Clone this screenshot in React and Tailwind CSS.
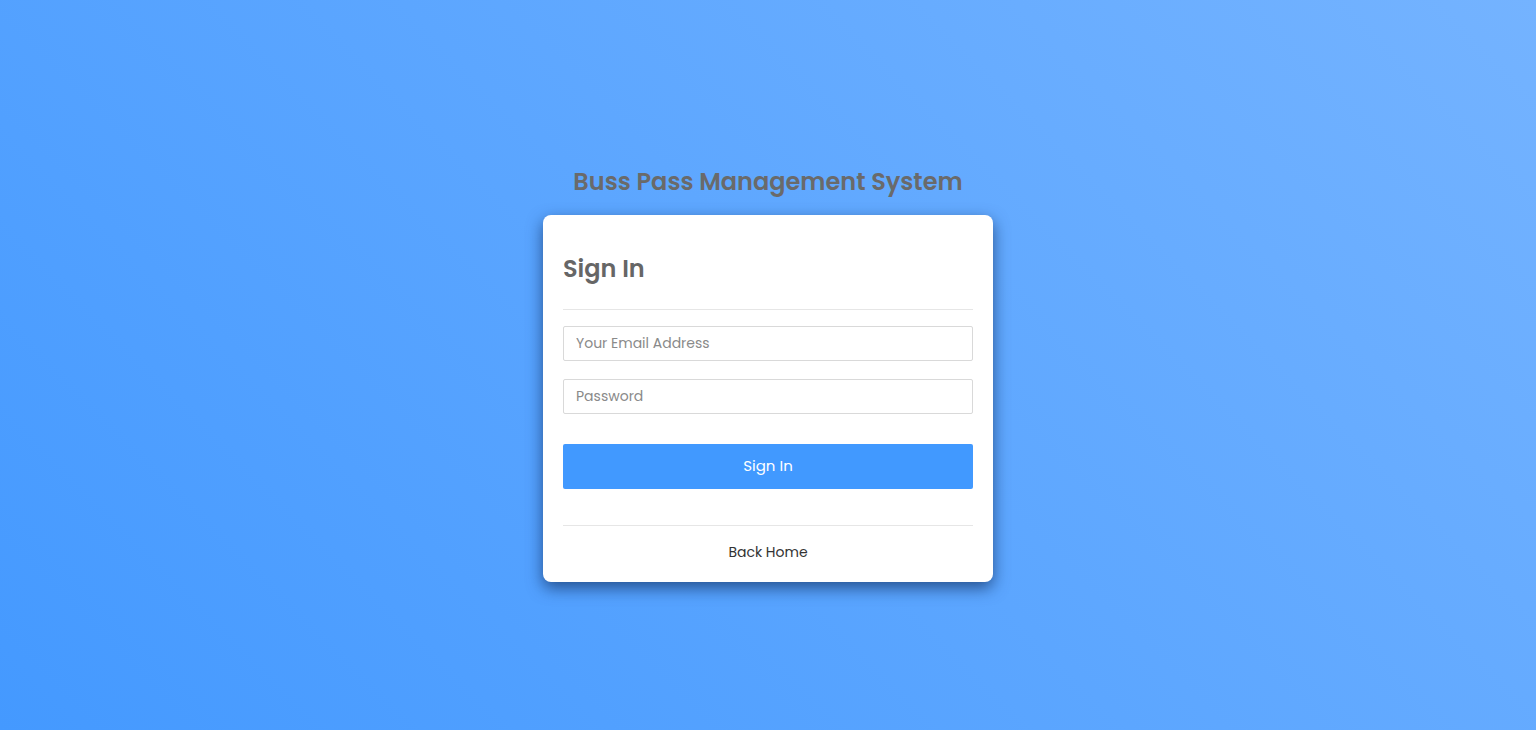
export default function App() {
  return (
    <div
      className="h-[730px] w-full flex flex-col items-center justify-center pt-[6px] bg-[linear-gradient(45deg,#4499ff,#74b3ff)]"
      style={{ fontFamily: 'Poppins, "Noto Sans", Inter, sans-serif' }}
    >
      <div className="flex flex-col items-center">
        <h1 className="text-[24px] leading-[36px] font-semibold text-[#6a6a6a] mb-[15px] mt-[9px]">Buss Pass Management System</h1>

        <div className="w-[450px] bg-white rounded-[8px] shadow-[0_6px_16px_rgba(15,45,95,0.7)] px-5 pt-[35px] pb-[19px]">
          <h2 className="text-[24px] leading-[38px] font-semibold text-[#666666]">Sign In</h2>
          <div className="border-t border-[#e6e6e6] mt-[21px] mb-4" />

          <input
            type="email"
            placeholder="Your Email Address"
            className="w-full h-[35px] border border-[#d9d9d9] rounded-[2px] px-3 text-[14px] text-[#555] placeholder:text-[#8a8a8a] outline-none"
          />
          <input
            type="password"
            placeholder="Password"
            className="w-full h-[35px] border border-[#d9d9d9] rounded-[2px] px-3 text-[14px] text-[#555] placeholder:text-[#8a8a8a] outline-none mt-[18px]"
          />

          <button className="w-full h-[45px] mt-[30px] bg-[#4199ff] rounded-[2px] text-white text-[15px]">Sign In</button>

          <div className="border-t border-[#e6e6e6] mt-[36px]" />
          <div className="text-center text-[14px] text-[#333] pt-[16px]">Back Home</div>
        </div>
      </div>
    </div>
  );
}
